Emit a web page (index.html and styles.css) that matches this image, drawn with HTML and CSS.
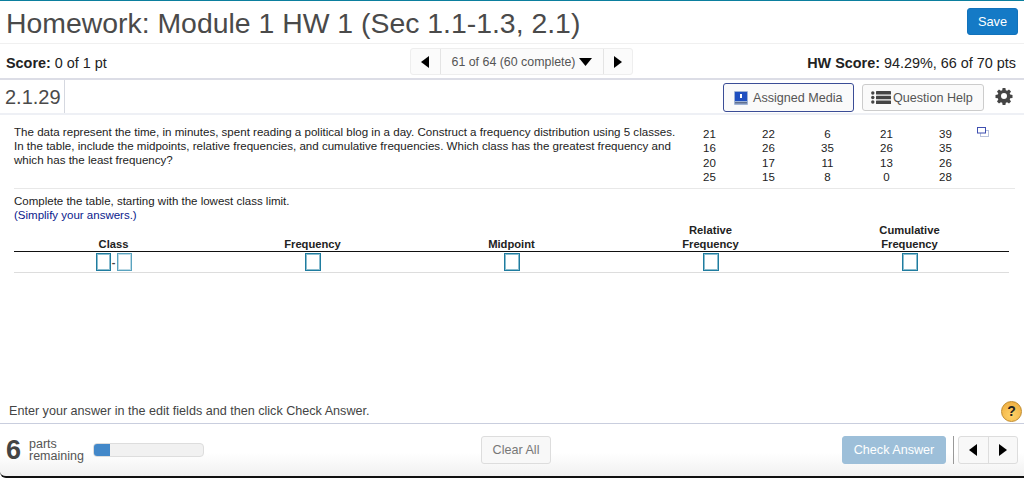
FILE: index.html
```html
<!DOCTYPE html>
<html lang="en">
<head>
<meta charset="utf-8">
<title>Homework</title>
<link rel="stylesheet" href="styles.css">
</head>
<body>
<div class="page">
  <header class="title-row">
    <h1 class="title">Homework: Module 1 HW 1 (Sec 1.1-1.3, 2.1)</h1>
    <button class="save">Save</button>
  </header>
  <div class="score-row">
    <div class="score"><b>Score:</b> 0 of 1 pt</div>
    <div class="pager">
      <span class="pager-arrow"><svg width="8" height="12" viewBox="0 0 8 12"><path d="M8 0V12L0 6Z"/></svg></span>
      <span class="pager-label">61 of 64 (60 complete)<svg class="caret" width="13" height="8" viewBox="0 0 13 8"><path d="M0 0H13L6.500 8Z"/></svg></span>
      <span class="pager-arrow"><svg width="8" height="12" viewBox="0 0 8 12"><path d="M0 0V12L8 6Z"/></svg></span>
    </div>
    <div class="hw-score"><b>HW Score:</b> 94.29%, 66 of 70 pts</div>
  </div>
  <div class="question-row">
    <div class="qnum">2.1.29</div>
    <div class="tools">
      <button class="tool media">
        <svg width="14" height="14" viewBox="0 0 14 14"><rect width="14" height="14" rx="1" fill="#9fb3d6"/><rect x="1" y="1" width="12" height="9" fill="#1f4fc0"/><rect x="6" y="3" width="2" height="4" fill="#fff"/><rect x="1" y="11" width="12" height="1.500" fill="#5f6f8f"/></svg>
        Assigned Media
      </button>
      <button class="tool help">
        <svg width="20" height="13" viewBox="0 0 20 13" fill="#444"><circle cx="1.800" cy="2" r="1.700"/><circle cx="1.800" cy="6.500" r="1.700"/><circle cx="1.800" cy="11" r="1.700"/><rect x="5" y="0" width="15" height="3.600" rx=".6"/><rect x="5" y="4.700" width="15" height="3.600" rx=".6"/><rect x="5" y="9.400" width="15" height="3.600" rx=".6"/></svg>
        Question Help
      </button>
      <svg class="gear" width="16" height="16" viewBox="0 0 16 16"><path fill="#444" fill-rule="evenodd" d="M6.600 0h2.800l.4 2.200 1.300.6L13 1.500l2 2-1.300 1.900.5 1.200 2.300.5v2.800l-2.300.4-.5 1.300 1.300 1.900-2 2-1.900-1.300-1.300.5-.4 2.300H6.600l-.4-2.300-1.300-.5L3 15.500l-2-2 1.300-1.900-.5-1.300L-.5 9.900V7.100l2.300-.5.5-1.200L1 3.500l2-2 1.900 1.300 1.300-.6zM8 5a3 3 0 1 0 0 6 3 3 0 0 0 0-6z"/></svg>
    </div>
  </div>
  <main class="content">
    <section class="prompt">
      <p class="prompt-text">The data represent the time, in minutes, spent reading a political blog in a day. Construct a frequency distribution using 5 classes. In the table, include the midpoints, relative frequencies, and cumulative frequencies. Which class has the greatest frequency and which has the least frequency?</p>
      <div class="data-wrap">
        <div class="data">
          <span>21</span><span>22</span><span>6</span><span>21</span><span>39</span>
          <span>16</span><span>26</span><span>35</span><span>26</span><span>35</span>
          <span>20</span><span>17</span><span>11</span><span>13</span><span>26</span>
          <span>25</span><span>15</span><span>8</span><span>0</span><span>28</span>
        </div>
        <svg class="copy" width="12" height="10" viewBox="0 0 12 10" fill="none"><rect x="3.500" y="3.500" width="8" height="6" stroke="#b9c2dc"/><rect x=".5" y=".5" width="8" height="5.500" stroke="#3f4fb0" fill="#fff"/></svg>
      </div>
    </section>
    <section class="task">
      <p class="task-line">Complete the table, starting with the lowest class limit.</p>
      <p class="task-hint">(Simplify your answers.)</p>
    </section>
    <div class="table">
      <div class="th">Class</div>
      <div class="th">Frequency</div>
      <div class="th">Midpoint</div>
      <div class="th">Relative<br>Frequency</div>
      <div class="th">Cumulative<br>Frequency</div>
      <div class="td"><span class="field narrow"></span><span class="dash">-</span><span class="field narrow light"></span></div>
      <div class="td"><span class="field"></span></div>
      <div class="td"><span class="field"></span></div>
      <div class="td"><span class="field"></span></div>
      <div class="td"><span class="field"></span></div>
    </div>
  </main>
  <div class="hint-row">
    <span>Enter your answer in the edit fields and then click Check Answer.</span>
    <span class="qmark">?</span>
  </div>
  <footer class="footer">
    <div class="parts">
      <span class="parts-num">6</span>
      <span class="parts-label">parts<br>remaining</span>
      <span class="progress"><span class="progress-fill"></span></span>
    </div>
    <button class="clear">Clear All</button>
    <div class="actions">
      <button class="check">Check Answer</button>
      <span class="sep"></span>
      <div class="nav">
        <span class="nav-btn"><svg width="8" height="12" viewBox="0 0 8 12"><path d="M8 0V12L0 6Z"/></svg></span>
        <span class="nav-btn"><svg width="8" height="12" viewBox="0 0 8 12"><path d="M0 0V12L8 6Z"/></svg></span>
      </div>
    </div>
  </footer>
</div>
</body>
</html>
```
FILE: styles.css
```css
* { box-sizing: border-box; }
html, body { margin: 0; padding: 0; background: #fff; }
body { font-family: "Liberation Sans", Arial, sans-serif; color: #222; width: 1024px; height: 478px; overflow: hidden; }
button { font-family: inherit; cursor: pointer; }
p { margin: 0; }
.page { width: 1024px; height: 478px; display: flex; flex-direction: column; border-top: 1px solid #0b7f9e; }

.title-row { height: 43px; display: flex; align-items: flex-start; justify-content: space-between; padding: 7px 6px 0 6px; border-bottom: 1px solid #f0f0f0; }
.title { margin: 0; font-size: 28.400px; line-height: 30px; font-weight: 400; color: #4a4a4a; white-space: nowrap; }
.save { width: 51px; height: 27px; background: #147ac6; border: 1px solid #1272bb; border-radius: 3px; color: #fff; font-size: 12.800px; padding: 0; }

.score-row { height: 36px; display: grid; grid-template-columns: 404px 223px 1fr; align-items: start; padding: 0 8px 0 6px; border-bottom: 2px solid #dcdde6; }
.score { font-size: 14.400px; line-height: 18px; padding-top: 10px; color: #222; }
.pager { display: flex; height: 27px; margin-top: 4px; background: #fbfbfb; border: 1px solid #eee; border-radius: 3px; align-items: stretch; color: #555; font-size: 12.400px; }
.pager-arrow { flex: 1; display: flex; align-items: center; justify-content: center; }
.pager-label { width: 164px; flex: none; display: flex; align-items: center; padding-left: 11px; gap: 4px; border-left: 1px solid #e4e4e4; border-right: 1px solid #e4e4e4; white-space: nowrap; }
.caret { flex: none; }
.hw-score { text-align: right; font-size: 14.400px; line-height: 18px; padding-top: 10px; color: #222; white-space: nowrap; }

.question-row { height: 35px; display: flex; justify-content: space-between; padding-left: 5px; border-bottom: 2px solid #eef0f5; }
.qnum { width: 60px; font-size: 20px; line-height: 34px; color: #4a4a4a; border-right: 1px solid #d5d8e0; }
.tools { display: flex; align-items: flex-start; padding-right: 12px; }
.tool { display: flex; align-items: center; font-size: 12.600px; color: #555; background: #fafafa; border-radius: 3px; padding: 0; white-space: nowrap; }
.media { width: 131px; height: 29px; margin-top: 3px; border: 1px solid #3b4d96; padding-left: 10px; gap: 5px; }
.help { width: 122px; height: 27px; margin: 4px 0 0 8px; border: 1px solid #ccc; padding-left: 8px; gap: 2px; }
.gear { margin: 8px 0 0 12px; overflow: visible; }

.content { flex: 1; padding: 0 9px 0 14px; }
.prompt { display: flex; height: 74px; padding-top: 8px; border-bottom: 1px solid #e8e8e8; }
.prompt-text { width: 663px; flex: none; font-size: 11.570px; line-height: 14px; color: #222; padding-top: 2px; }
.data-wrap { position: relative; flex: 1; }
.data { display: grid; grid-template-columns: repeat(5, 59px); margin-left: 3px; font-size: 11.500px; line-height: 14.330px; text-align: center; padding-top: 4px; }
.copy { position: absolute; left: 300px; top: 4px; }
.task { padding-top: 5px; font-size: 11.500px; line-height: 14px; }
.task-hint { color: #0a1a8c; }
.table { display: grid; grid-template-columns: repeat(5, 199px); width: 996px; margin-top: 2px; }
.th { display: flex; align-items: flex-end; justify-content: center; text-align: center; height: 28px; font-size: 11.200px; line-height: 13.500px; font-weight: 700; color: #222; border-bottom: 1px solid #111; }
.td { height: 21px; display: flex; align-items: center; justify-content: center; border-bottom: 1px solid #ddd; }
.field { width: 16px; height: 18px; border: 1px solid #1f7c9f; box-shadow: inset 0 0 0 1px rgba(43, 135, 168, .55); background: #fff; display: block; }
.field.narrow { width: 15px; }
.field.light { border-color: #5aa3bf; box-shadow: inset 0 0 0 1px rgba(90, 163, 191, .4); }
.dash { font-size: 11px; font-weight: 700; width: 6px; text-align: center; color: #444; }

.hint-row { height: 37px; display: flex; align-items: center; justify-content: space-between; padding: 12px 2px 0 9px; border-bottom: 1px solid #c9cede; font-size: 12.600px; color: #444; }
.qmark { width: 21px; height: 21px; border-radius: 50%; background: radial-gradient(circle at 50% 70%, #ffd36a, #eda93a); border: 1px solid #c08a2a; color: #222; font-weight: 700; font-size: 14px; display: flex; align-items: center; justify-content: center; }

.footer { height: 54px; display: grid; grid-template-columns: 1fr auto 1fr; align-items: start; padding: 12px 6px 0 6px; background: linear-gradient(#fff 55%, #f1f1f1); border-bottom: 2px solid #111; border-radius: 0 0 0 6px; }
.parts { display: flex; align-items: center; height: 27px; }
.parts-num { font-size: 27px; font-weight: 700; color: #444; line-height: 27px; width: 23px; padding-top: 2px; box-sizing: content-box; }
.parts-label { font-size: 12.500px; line-height: 12px; color: #555; width: 64px; }
.progress { display: block; align-self: flex-start; width: 111px; height: 14px; margin-top: 7px; background: #f1f1f1; border: 1px solid #ddd; border-radius: 4px; overflow: hidden; }
.progress-fill { display: block; width: 16px; height: 100%; background: #4388c9; }
.clear { width: 70px; height: 28px; background: #f8f8f8; border: 1px solid #ddd; border-radius: 3px; color: #777; font-size: 12.600px; padding: 0; margin-left: 8px; }
.actions { display: flex; justify-content: flex-end; align-items: flex-start; }
.check { width: 104px; height: 28px; background: #9dbfd9; border: 1px solid #9dbfd9; border-radius: 3px; color: #fff; font-size: 12.600px; padding: 0; white-space: nowrap; }
.sep { width: 1px; height: 28px; background: #999; margin: 0 4px 0 7px; }
.nav { display: flex; width: 60px; height: 28px; background: #f8f8f8; border: 1px solid #ddd; border-radius: 3px; }
.nav-btn { flex: 1; display: flex; align-items: center; justify-content: center; }
.nav-btn + .nav-btn { border-left: 1px solid #ddd; }
```
